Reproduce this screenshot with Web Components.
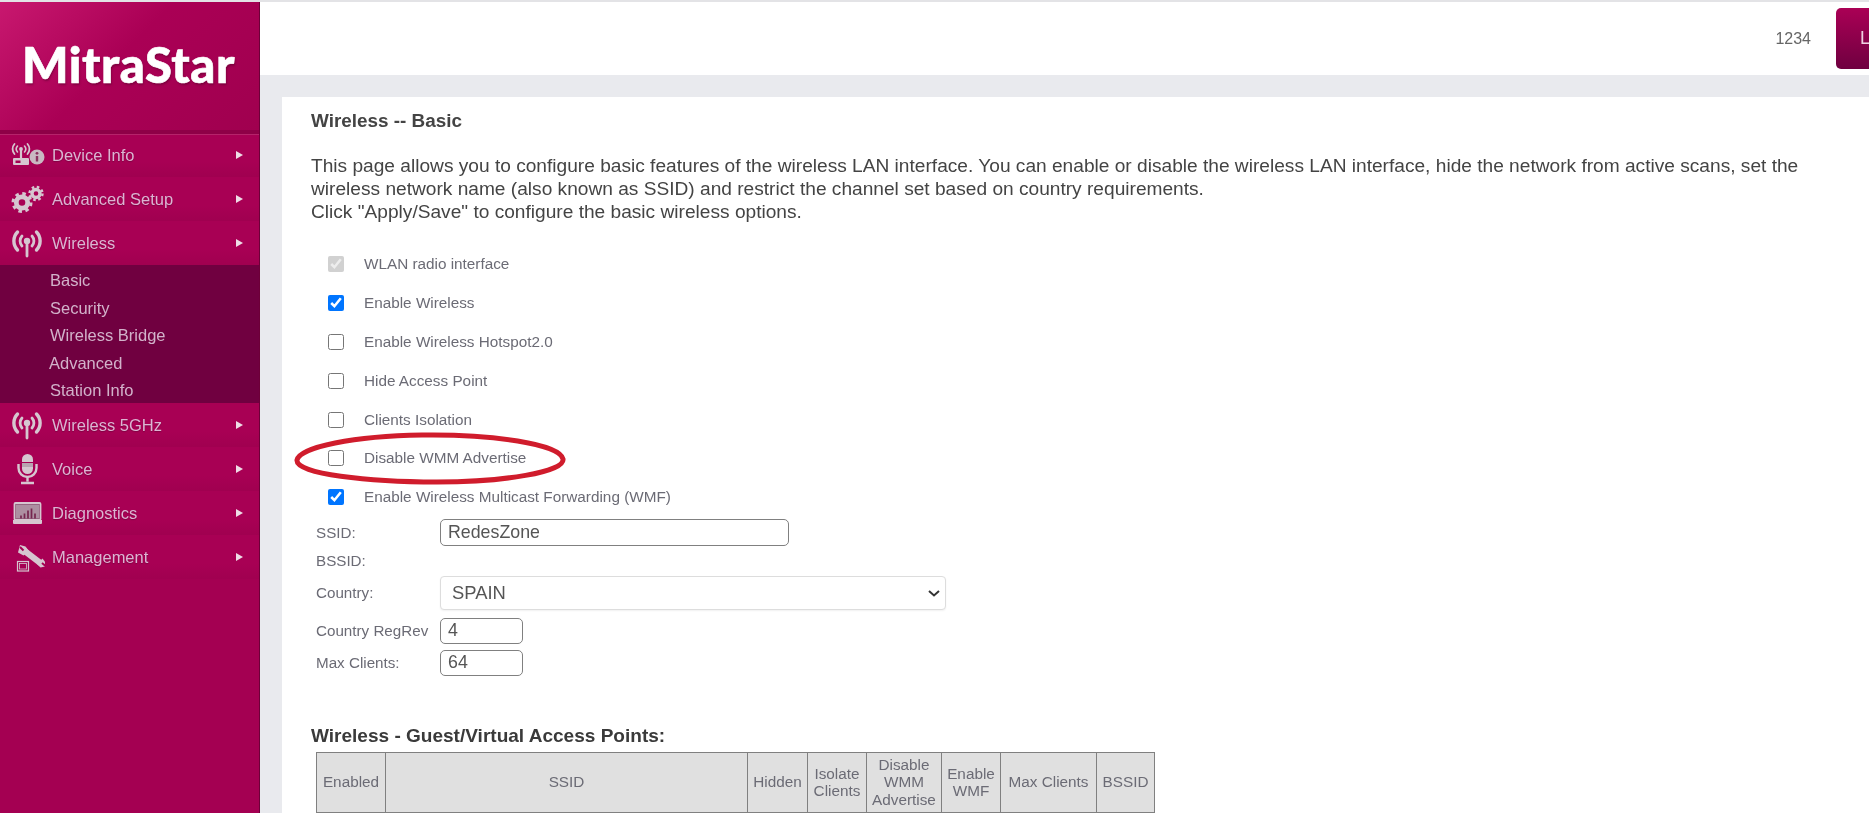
<!DOCTYPE html>
<html>
<head>
<meta charset="utf-8">
<title>Wireless -- Basic</title>
<style>
  html, body { margin: 0; height: 813px; overflow: hidden; background: #fff; }
  body { font-family: "Liberation Sans", Arial, sans-serif; }
</style>
</head>
<body>
<router-app>
  <side-bar slot="side">
    <menu-item icon="info">Device Info</menu-item>
    <menu-item icon="gears">Advanced Setup</menu-item>
    <menu-item icon="wifi">Wireless</menu-item>
    <sub-menu>
      <span>Basic</span>
      <span>Security</span>
      <span>Wireless Bridge</span>
      <span style="margin-left:-1px">Advanced</span>
      <span>Station Info</span>
    </sub-menu>
    <menu-item icon="wifi">Wireless 5GHz</menu-item>
    <menu-item icon="mic">Voice</menu-item>
    <menu-item icon="laptop">Diagnostics</menu-item>
    <menu-item icon="wrench">Management</menu-item>
  </side-bar>
  <top-bar slot="top" user="1234"></top-bar>
  <basic-page></basic-page>
</router-app>

<script>
const ICONS = {
  wifi: `<g fill="none" stroke="currentColor" stroke-linecap="round">
      <path d="M8.500 5a13 13 0 0 0 0 18M27.500 5a13 13 0 0 1 0 18" stroke-width="3.400"/>
      <path d="M13 9a7.500 7.500 0 0 0 0 10M23 9a7.500 7.500 0 0 1 0 10" stroke-width="2.800"/>
      <path d="M18 15v14" stroke-width="2.800"/>
    </g><circle cx="18" cy="14" r="3.200" fill="currentColor"/>`,
  info: `<g fill="none" stroke="currentColor" stroke-linecap="round">
      <path d="M5.500 5a7.500 7.500 0 0 0 0 10M18.500 5a7.500 7.500 0 0 1 0 10" stroke-width="1.800"/>
      <path d="M8.500 7a4.500 4.500 0 0 0 0 6M15.500 7a4.500 4.500 0 0 1 0 6" stroke-width="1.600"/>
      <path d="M12 10v10" stroke-width="2.200"/>
    </g><circle cx="12" cy="10" r="1.900" fill="currentColor"/>
    <rect x="4" y="19" width="16" height="7" rx="1" fill="currentColor"/>
    <rect x="6.500" y="21.500" width="5" height="2.500" fill="#a40052"/>
    <circle cx="28" cy="18" r="7.500" fill="#c9b8c2"/>
    <rect x="26.800" y="17" width="2.400" height="5.500" fill="#8c3060"/>
    <circle cx="28" cy="14.300" r="1.400" fill="#8c3060"/>`,
  gears: `<g fill="none" stroke="currentColor">
      <circle cx="13" cy="19.500" r="5.700" stroke-width="4.800"/>
      <circle cx="13" cy="19.500" r="9" stroke-width="3" stroke-dasharray="3.530 3.540"/>
      <circle cx="27" cy="10.500" r="4" stroke-width="3.400"/>
      <circle cx="27" cy="10.500" r="6.500" stroke-width="2.400" stroke-dasharray="2.550 2.555"/>
    </g>`,
  mic: `<rect x="13" y="1" width="11" height="20" rx="5.500" fill="currentColor"/>
    <path d="M13 9.500h11" stroke="#a40052" stroke-width="1"/>
    <rect x="13" y="10" width="11" height="4" fill="#b8a3b0"/>
    <path d="M9.500 11v4a9 9 0 0 0 18 0v-4M18.500 24v4.500M12 30h13" fill="none" stroke="currentColor" stroke-width="2.400"/>`,
  laptop: `<rect x="5.500" y="6" width="26" height="17" rx="1" fill="#7d3b60" stroke="currentColor" stroke-width="1.800"/>
    <rect x="7" y="7.500" width="23" height="14" fill="#ad8fa1"/>
    <path d="M12 21.500v-3M15.500 21.500v-5M19 21.500v-8M22.500 21.500v-10M26 21.500v-5" stroke="#76264f" stroke-width="1.700"/>
    <path d="M4 23h29v3a1 1 0 0 1-1 1H5a1 1 0 0 1-1-1z" fill="currentColor"/>`,
  wrench: `<path d="M15 9.500l17 13" stroke="currentColor" stroke-width="6" stroke-linecap="round"/>
    <path d="M11 4l5.500 1.500 3.500 4.500-5.500 4.500-5.500-3z" fill="currentColor"/>
    <path d="M11 6l3.500 3.500" stroke="#a40052" stroke-width="2"/>
    <path d="M33.500 17.500l3.500 4.500-1 3.500-4.500 1-3.500-3.500z" fill="currentColor"/>
    <path d="M36.500 25l-3.500-3" stroke="#a40052" stroke-width="2"/>
    <rect x="8.500" y="20.500" width="11" height="9.500" fill="#a40052" stroke="currentColor" stroke-width="1.200"/>
    <rect x="10.500" y="22.500" width="7" height="5.500" fill="none" stroke="currentColor" stroke-width=".8"/>`
};

class RouterApp extends HTMLElement {
  constructor() {
    super();
    this.attachShadow({ mode: "open" }).innerHTML = `
      <style>
        :host { display: grid; grid-template-columns: 260px 1fr; height: 813px; padding-top: 2px; box-sizing: border-box; background: #e3e3e6; position: relative; filter: blur(.3px); }
        .side { grid-row: 1; min-height: 0; }
        .right { display: flex; flex-direction: column; min-width: 0; min-height: 0; background: #e9eaee; }
        .main { flex: 1; min-height: 0; margin: 22px 0 0 22px; background: #fff; overflow: hidden; }
      </style>
      <div class="side"><slot name="side"></slot></div>
      <div class="right">
        <slot name="top"></slot>
        <div class="main"><slot></slot></div>
      </div>`;
  }
}

class SideBar extends HTMLElement {
  constructor() {
    super();
    this.attachShadow({ mode: "open" }).innerHTML = `
      <style>
        :host { display: block; height: 100%; background: #a40052; border-right: 1px solid #6d0038; box-sizing: border-box; }
        .logo { height: 131px; box-sizing: border-box; border-bottom: 3px solid #8e0047; box-shadow: 0 1px 0 #8e0047, 0 2px 0 #b5236a; position: relative;
          background: linear-gradient(135deg, #c8186f 0%, #aa0055 45%, #a0004f 100%);
          display: flex; padding: 36px 0 0 22px; }
        .logo span { font: 900 49px/52px Lato, "Liberation Sans", sans-serif; color: #fff; letter-spacing: 0.5px; -webkit-text-stroke: .6px #fff; text-shadow: 1px 2px 2px rgba(80,0,40,.45); }
        .menu { display: flex; flex-direction: column; }
      </style>
      <div class="logo"><span>MitraStar</span></div>
      <div class="menu"><slot></slot></div>`;
  }
}

class MenuItem extends HTMLElement {
  constructor() {
    super();
    const icon = ICONS[this.getAttribute("icon")] || "";
    this.attachShadow({ mode: "open" }).innerHTML = `
      <style>
        :host { display: flex; align-items: center; height: 44px; box-sizing: border-box; padding: 0 16px 0 9px; color: #dcb4d2;
          background: linear-gradient(#a80054 0%, #a80054 65%, #a00050 100%);
          font: 16.500px "Liberation Sans", Arial, sans-serif; }
        svg { width: 36px; height: 32px; color: #d6c6d0; flex: none; margin-right: 7px; }
        .txt { flex: 1; text-shadow: 0 1px 1px rgba(70,0,40,.4); }
        .arrow { width: 0; height: 0; border-left: 7px solid #eedde6; border-top: 4px solid transparent; border-bottom: 4px solid transparent; }
      </style>
      <svg viewBox="0 0 36 32">${icon}</svg>
      <span class="txt"><slot></slot></span>
      <i class="arrow"></i>`;
  }
}

class SubMenu extends HTMLElement {
  constructor() {
    super();
    this.attachShadow({ mode: "open" }).innerHTML = `
      <style>
        :host { display: flex; flex-direction: column; height: 138px; box-sizing: border-box; padding: 2px 0 0 50px; background: #700040; color: #d2b2ca; font: 16.500px/27.500px "Liberation Sans", Arial, sans-serif; }
        ::slotted(span) { display: block; height: 27.500px; }
      </style>
      <slot></slot>`;
  }
}

class TopBar extends HTMLElement {
  constructor() {
    super();
    this.attachShadow({ mode: "open" }).innerHTML = `
      <style>
        :host { display: flex; align-items: center; justify-content: flex-end; height: 73px; flex: none; background: #fff; box-sizing: border-box; }
        .user { font: 16px "Liberation Sans", Arial, sans-serif; color: #666; margin-right: 25px; }
        .btn { width: 33px; height: 61px; box-sizing: border-box; padding: 19px 0 0 24px; border-radius: 5px 0 0 5px;
          background: linear-gradient(#aa0055, #6f0040); color: #f0d0e2; font: 18px/22px "Liberation Sans", Arial, sans-serif; overflow: hidden; }
      </style>
      <span class="user">${this.getAttribute("user")}</span>
      <div class="btn">L</div>`;
  }
}

class CheckRow extends HTMLElement {
  constructor() {
    super();
    const on = this.hasAttribute("checked") ? "checked" : "";
    const off = this.hasAttribute("disabled") ? "disabled" : "";
    this.attachShadow({ mode: "open" }).innerHTML = `
      <style>
        :host { display: flex; align-items: center; height: 38.800px; padding-left: 17px; color: #6b6b75; font: 15.300px "Liberation Sans", Arial, sans-serif; }
        input { width: 16px; height: 16px; margin: 0 20px 0 0; flex: none; }
      </style>
      <input type="checkbox" ${on} ${off}>
      <label><slot></slot></label>`;
  }
}

class FieldRow extends HTMLElement {
  constructor() {
    super();
    this.attachShadow({ mode: "open" }).innerHTML = `
      <style>
        :host { display: grid; grid-template-columns: 124px 1fr; align-items: center; padding-left: 5px; color: #6b6b75; font: 15.200px "Liberation Sans", Arial, sans-serif; }
      </style>
      <span>${this.getAttribute("label")}</span>
      <div style="display:flex;height:100%;position:relative"><slot></slot></div>`;
  }
}

class BasicPage extends HTMLElement {
  constructor() {
    super();
    this.attachShadow({ mode: "open" }).innerHTML = `
      <style>
        :host { display: block; padding: 13px 0 0 29px; color: #444; font: 19.140px/23px "Liberation Sans", Arial, sans-serif; position: relative; }
        h2 { margin: 0; font-size: 18.900px; line-height: 22px; color: #444; }
        p { margin: 22px 61px 0 0; }
        .checks { margin-top: 22px; display: flex; flex-direction: column; }
        .form { margin-top: 2px; display: flex; flex-direction: column; }
        input[type=text], select { box-sizing: border-box; font: 17.800px "Liberation Sans", Arial, sans-serif; color: #555; background: #fff; outline: none; }
        input[type=text] { height: 27px; border: 1px solid #808080; border-radius: 5px; padding: 0 7px; display: block; }
        select { width: 506px; height: 34px; border: 1px solid #ddd; border-radius: 4px; padding: 0 11px; font-size: 18.400px; appearance: none; box-shadow: 0 1px 2px rgba(0,0,0,.06); }
        .chev { position: absolute; left: 488px; top: 14px; width: 12px; height: 7px; }
        h3 { margin: 49px 0 0; font-size: 19.050px; line-height: 22px; color: #3a3a3a; }
        table { margin: 5px 0 0 5px; border-collapse: collapse; table-layout: fixed; width: 838px; color: #6b6b75; font: 15.300px/17.300px "Liberation Sans", Arial, sans-serif; }
        th, td { border: 1.500px solid #808080; padding: 0; text-align: center; font-weight: normal; }
        th { height: 59px; background: #e0e0e0; }
        td { height: 60px; }
        .mark { position: absolute; left: 12px; top: 335px; width: 272px; height: 54px; pointer-events: none; }
      </style>
      <h2>Wireless -- Basic</h2>
      <p>This page allows you to configure basic features of the wireless LAN interface. You can enable or disable the wireless LAN interface, hide the network from active scans, set the wireless network name (also known as SSID) and restrict the channel set based on country requirements.<br>Click "Apply/Save" to configure the basic wireless options.</p>
      <div class="checks">
        <check-row checked disabled>WLAN radio interface</check-row>
        <check-row checked>Enable Wireless</check-row>
        <check-row>Enable Wireless Hotspot2.0</check-row>
        <check-row>Hide Access Point</check-row>
        <check-row>Clients Isolation</check-row>
        <check-row>Disable WMM Advertise</check-row>
        <check-row checked>Enable Wireless Multicast Forwarding (WMF)</check-row>
      </div>
      <div class="form">
        <field-row label="SSID:" style="height:27px"><input type="text" value="RedesZone" style="width:349px"></field-row>
        <field-row label="BSSID:" style="height:30px"></field-row>
        <field-row label="Country:" style="height:34px"><select><option>SPAIN</option></select><svg class="chev" viewBox="0 0 12 7"><path d="M1 1l5 4.500L11 1" fill="none" stroke="#333" stroke-width="2"/></svg></field-row>
        <field-row label="Country RegRev" style="height:26px;margin-top:8px"><input type="text" value="4" style="width:83px;height:26px"></field-row>
        <field-row label="Max Clients:" style="height:26px;margin-top:6px"><input type="text" value="64" style="width:83px;height:26px"></field-row>
      </div>
      <h3>Wireless - Guest/Virtual Access Points:</h3>
      <table>
        <colgroup><col style="width:69px"><col style="width:362px"><col style="width:60px"><col style="width:59px"><col style="width:75px"><col style="width:59px"><col style="width:96px"><col style="width:58px"></colgroup>
        <tr><th>Enabled</th><th>SSID</th><th>Hidden</th><th>Isolate<br>Clients</th><th>Disable<br>WMM<br>Advertise</th><th>Enable<br>WMF</th><th>Max Clients</th><th>BSSID</th></tr>
        <tr><td></td><td></td><td></td><td></td><td></td><td></td><td></td><td></td></tr>
      </table>
      <svg class="mark" viewBox="0 0 272 54"><path d="M3 28C6 15 60 4 128 3c70-1 138 9 141 24 2 13-60 23-126 23C75 50 1 42 3 28z" fill="none" stroke="#d01c2c" stroke-width="5"/></svg>`;
  }
}

customElements.define("router-app", RouterApp);
customElements.define("side-bar", SideBar);
customElements.define("menu-item", MenuItem);
customElements.define("sub-menu", SubMenu);
customElements.define("top-bar", TopBar);
customElements.define("check-row", CheckRow);
customElements.define("field-row", FieldRow);
customElements.define("basic-page", BasicPage);
</script>
</body>
</html>
